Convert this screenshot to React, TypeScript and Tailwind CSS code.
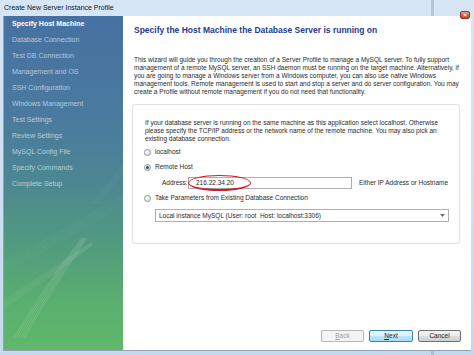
const steps = [
  "Specify Host Machine",
  "Database Connection",
  "Test DB Connection",
  "Management and OS",
  "SSH Configuration",
  "Windows Management",
  "Test Settings",
  "Review Settings",
  "MySQL Config File",
  "Specify Commands",
  "Complete Setup",
];

function Radio({ checked }: { checked?: boolean }) {
  return (
    <span className="flex h-[7px] w-[7px] shrink-0 items-center justify-center rounded-full border border-[#8e959b] bg-[radial-gradient(circle_at_35%_35%,#ffffff,#d3d7db)]">
      {checked && <span className="h-[3px] w-[3px] rounded-full bg-[#24507c]" />}
    </span>
  );
}

function Sidebar() {
  return (
    <aside className="relative w-[119px] shrink-0 overflow-hidden bg-[linear-gradient(180deg,#4671a2_0%,#4a7a9f_30%,#4c8791_50%,#519a7f_68%,#5aae6f_85%,#5fb86a_100%)] pl-[8px]">
      {/* swoosh decoration */}
      <svg className="absolute inset-0 h-full w-full" viewBox="0 0 119 334" preserveAspectRatio="none">
        <g fill="none" stroke="#ffffff" strokeWidth="0.6">
          {[0, 2, 4, 6, 8, 10].map((d) => (
            <path key={"a" + d} opacity="0.22" d={`M${10 + d} 322 Q ${40 + d} 270 ${78 + d * 0.5} 222`} />
          ))}
          {[0, 2, 4, 6, 8].map((d) => (
            <path key={"b" + d} opacity="0.16" d={`M0 ${284 + d} Q 45 ${255 + d} ${88} ${226 + d * 0.4}`} />
          ))}
          {[0, 3, 6, 9].map((d) => (
            <path key={"c" + d} opacity="0.1" d={`M0 ${246 + d} Q 55 ${218 + d} 119 ${180 + d}`} />
          ))}
          {[0, 3, 6].map((d) => (
            <path key={"e" + d} opacity="0.12" d={`M${88 + d} 188 L ${119} ${150 + d}`} />
          ))}
        </g>
      </svg>
      <ul className="relative flex flex-col text-[7px] leading-[16px]">
        {steps.map((s, i) => (
          <li key={s} className={i === 0 ? "font-bold text-white" : "text-white/60"}>
            {s}
          </li>
        ))}
      </ul>
    </aside>
  );
}

function Main() {
  return (
    <main className="flex flex-1 flex-col bg-white pl-[9px] pr-[10px] text-[#2a2a2a]">
      <h1 className="mt-[9px] pl-[2px] text-[8.5px] font-bold leading-[10px] text-[#1d3c91]">
        Specify the Host Machine the Database Server is running on
      </h1>
      <p className="mt-[21px] whitespace-nowrap pl-[2px] text-[6.5px] leading-[8px]">
        This wizard will guide you through the creation of a Server Profile to manage a MySQL server. To fully support
        <br />
        management of a remote MySQL server, an SSH daemon must be running on the target machine. Alternatively, if
        <br />
        you are going to manage a Windows server from a Windows computer, you can also use native Windows
        <br />
        management tools. Remote management is used to start and stop a server and do server configuration. You may
        <br />
        create a Profile without remote management if you do not need that functionality.
      </p>

      <section className="mr-[1px] mt-[8px] flex h-[140px] flex-col rounded-[3px] border border-[#dbe2e8] pl-[11px] text-[6.5px]">
        <p className="mt-[14px] whitespace-nowrap pl-[1px] leading-[8px]">
          If your database server is running on the same machine as this application select localhost. Otherwise
          <br />
          please specify the TCP/IP address or the network name of the remote machine. You may also pick an
          <br />
          existing database connection.
        </p>
        <label className="mt-[5px] flex h-[8px] items-center gap-[4px]">
          <Radio />
          <span>localhost</span>
        </label>
        <label className="mt-[7px] flex h-[8px] items-center gap-[4px]">
          <Radio checked />
          <span>Remote Host</span>
        </label>
        <div className="mt-[6px] flex h-[12px] items-center">
          <span className="ml-[18px] w-[26px]">Address:</span>
          <div className="relative flex h-[12px] w-[164px] items-center border border-[#abadb3] bg-white pl-[7px]">
            <span>216.22.34.20</span>
            <span className="absolute -left-[1px] -top-[3px] h-[16px] w-[63px] rounded-[50%] border-[1.5px] border-b-2 border-[#c9202c]" />
          </div>
          <span className="ml-[7px]">Either IP Address or Hostname</span>
        </div>
        <label className="mt-[5px] flex h-[8px] items-center gap-[4px]">
          <Radio />
          <span>Take Parameters from Existing Database Connection</span>
        </label>
        <div className="ml-[11px] mt-[7px] flex h-[13px] w-[294px] items-center justify-between border border-[#acb0b5] bg-white pl-[3px] pr-[3px]">
          <span>Local instance MySQL (User: root&nbsp; Host: localhost:3306)</span>
          <svg width="5" height="3" viewBox="0 0 5 3">
            <path d="M0 0 L5 0 L2.5 3 Z" fill="#6d6d6d" />
          </svg>
        </div>
      </section>

      <div className="mb-[8px] mt-auto flex justify-end gap-[5px] text-[6.5px]">
        <button className="h-[12px] w-[43px] rounded-[2px] border border-[#b3b8bb] bg-[#f4f4f4] text-[#a0a0a0]">
          <u>B</u>ack
        </button>
        <button className="h-[12px] w-[44px] rounded-[2px] border border-[#3c7fb1] bg-[linear-gradient(180deg,#eaf6fd_0%,#d9f0fc_50%,#bee6fd_50%,#a7d9f5_100%)] text-[#1a1a1a]">
          <u>N</u>ext
        </button>
        <button className="h-[12px] w-[43px] rounded-[2px] border border-[#707070] bg-[linear-gradient(180deg,#f2f2f2_0%,#ebebeb_50%,#dddddd_50%,#cfcfcf_100%)] text-[#1a1a1a]">
          Cancel
        </button>
      </div>
    </main>
  );
}

export default function App() {
  return (
    <div className="relative flex h-[355px] w-[474px] flex-col overflow-hidden bg-[linear-gradient(180deg,#d7e6f5_0%,#c5d9ee_100%)] font-['Liberation_Sans',Arial,sans-serif]">
      <div className="flex h-[16px] shrink-0 items-center pl-[4px] text-[7px] text-[#151515]">
        Create New Server Instance Profile
      </div>
      {/* background window edge */}
      <div className="absolute left-[431px] top-0 h-[16px] w-[3px] bg-[#9fb0c2]/60" />
      <div className="absolute bottom-0 left-[431px] h-[5px] w-[3px] bg-[#9fb0c2]/60" />
      {/* close button */}
      <div className="absolute right-[4px] top-[11px] z-10 flex h-[8px] w-[10px] items-center justify-center rounded-[2px] border border-[#8d3b2f] bg-[linear-gradient(180deg,#e9a393_0%,#d5644d_50%,#c3402b_100%)] text-[6px] font-bold leading-none text-white">
        ×
      </div>
      <div className="mx-[3px] mb-[4px] flex flex-1 border-b border-l border-[#95a3b0]">
        <Sidebar />
        <Main />
      </div>
    </div>
  );
}
